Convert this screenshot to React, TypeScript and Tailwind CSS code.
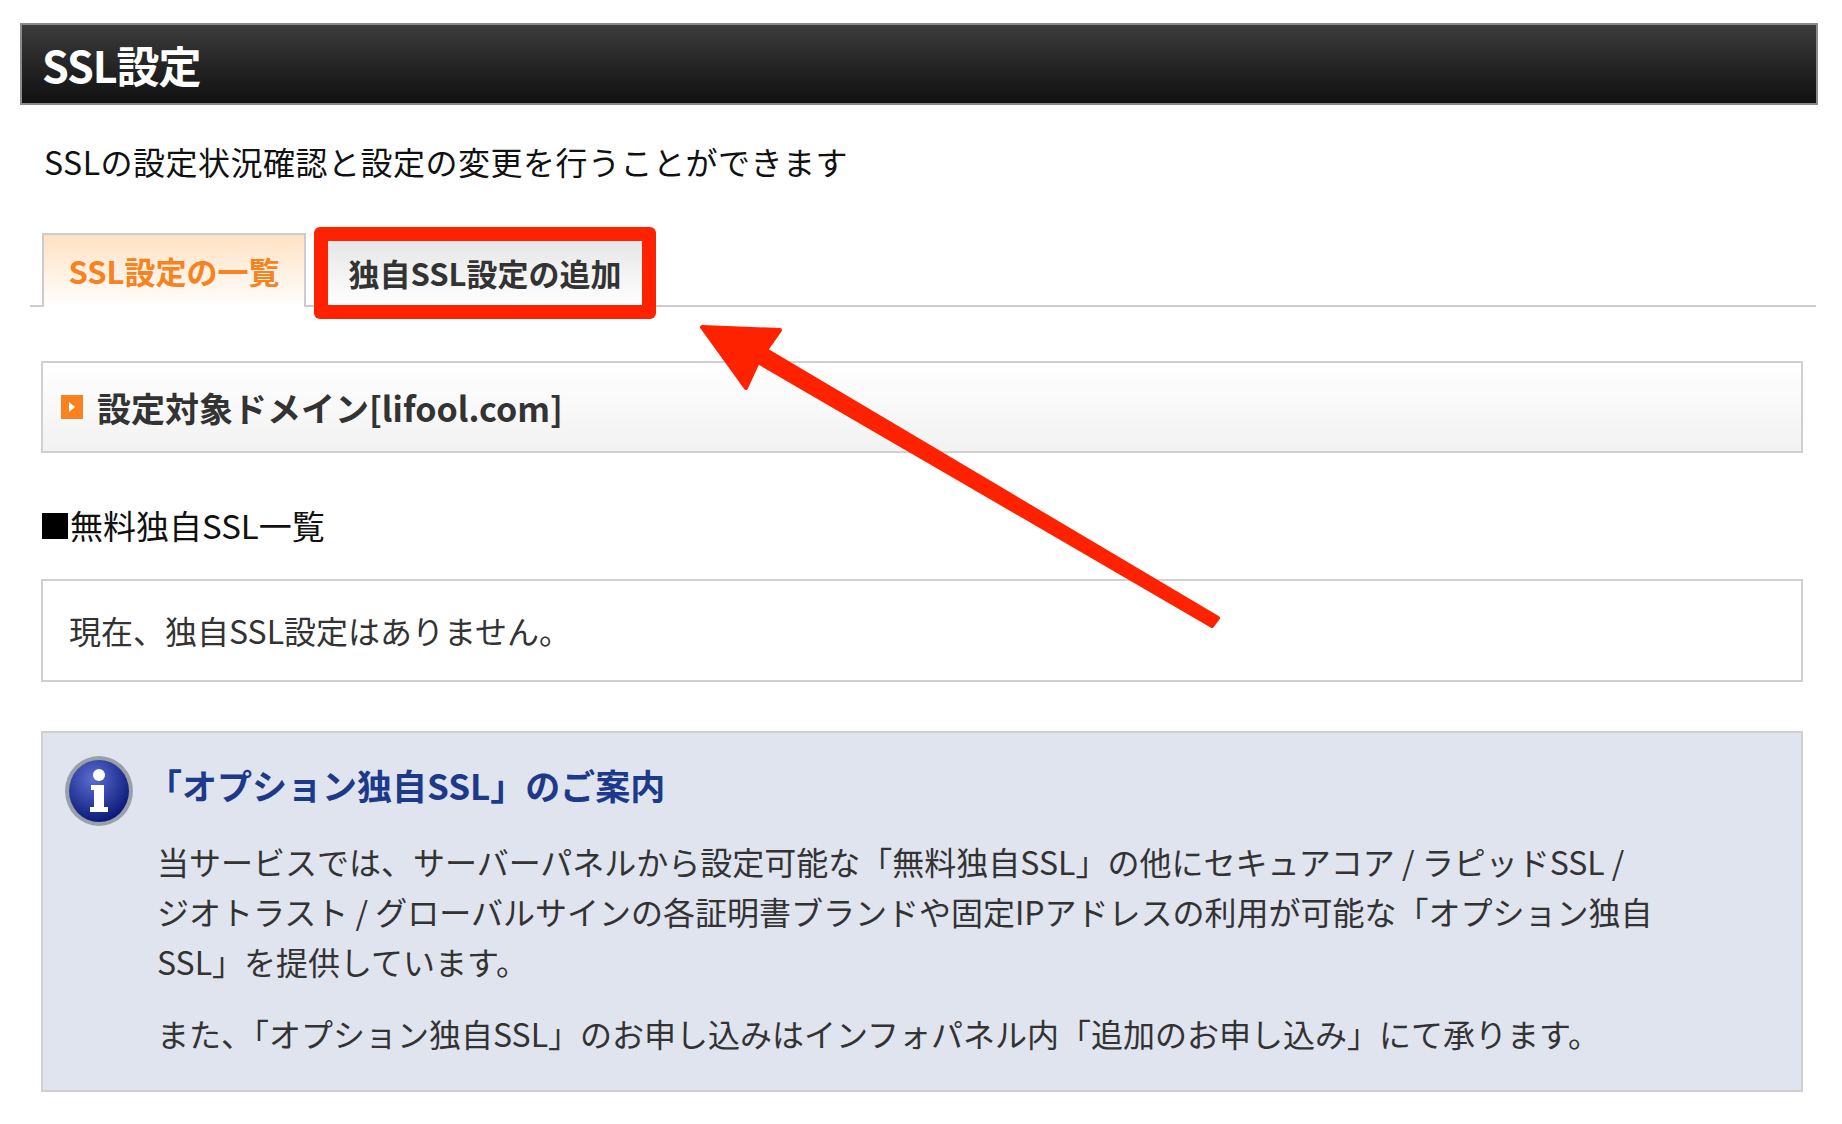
import React from "react";

export default function App() {
  const f = { fontFamily: '"Noto Sans CJK JP", "Noto Sans", sans-serif' };
  return (
    <div className="relative w-[1842px] h-[1124px] bg-white overflow-hidden" style={f}>
      <div className="pt-[23px] pl-[20px] pr-[24px]">
        <div className="h-[82px] border-2 border-[#8a8a8a] bg-gradient-to-b from-[#3c3c3c] to-[#111] flex items-center pl-[20px]">
          <span className="text-white text-[43px] font-bold tracking-tight">SSL設定</span>
        </div>
      </div>
      <div className="pl-[44px] mt-[40px] text-[32px] text-[#111] leading-none tracking-[0.5px]">SSLの設定状況確認と設定の変更を行うことができます</div>
      <div className="mt-[54px] ml-[30px] mr-[26px] border-b-2 border-[#ccc] flex items-end h-[76px] pl-[12px] gap-[8px]">
        <div className="h-[74px] w-[264px] border-2 border-b-0 border-[#ccc] bg-gradient-to-b from-[#ffe1c2] to-white flex items-center justify-center -mb-[2px]">
          <span className="text-[31px] font-bold text-[#f7821e]">SSL設定の一覧</span>
        </div>
        <div className="relative h-[92px] w-[342px] -mb-[14px] bg-[#ff2200] rounded-[6px] p-[14px]">
          <div className="h-full w-full bg-gradient-to-b from-[#e6e6e6] to-white flex items-center justify-center">
            <span className="text-[31px] font-bold text-[#333]">独自SSL設定の追加</span>
          </div>
        </div>
      </div>
      <div className="mt-[54px] ml-[41px] w-[1762px] h-[92px] border-2 border-[#d0d0d0] bg-gradient-to-b from-white to-[#f2f2f2] flex items-center pl-[18px] gap-[14px]">
        <div className="w-[22px] h-[24px] bg-[#f7821e] flex items-center justify-center">
          <div className="w-0 h-0 border-y-[5px] border-y-transparent border-l-[6px] border-l-white" />
        </div>
        <span className="text-[34px] font-bold text-[#333]">設定対象ドメイン[lifool.com]</span>
      </div>
      <div className="mt-[48px] ml-[42px] flex items-center text-[33px] text-[#111]">
        <span className="inline-block w-[26px] h-[26px] bg-black mr-[2px]" />無料独自SSL一覧
      </div>
      <div className="mt-[28px] ml-[41px] w-[1762px] h-[103px] border-2 border-[#d0d0d0] flex items-center pl-[26px] text-[32px] text-[#333]">
        現在、独自SSL設定はありません。
      </div>
      <div className="mt-[49px] ml-[41px] w-[1762px] h-[361px] border-2 border-[#d0d0d0] bg-[#dfe4ee] pt-[22px] pl-[20px] flex gap-[22px]">
        <svg width="72" height="72" viewBox="0 0 72 72" className="shrink-0">
          <defs>
            <radialGradient id="g" cx="40%" cy="30%" r="70%">
              <stop offset="0" stopColor="#5a6fd0" />
              <stop offset="1" stopColor="#0d1a7a" />
            </radialGradient>
          </defs>
          <ellipse cx="36" cy="36" rx="34" ry="35" fill="#9aa0aa" />
          <ellipse cx="36" cy="36" rx="30" ry="31" fill="url(#g)" />
          <circle cx="36" cy="20" r="6" fill="#fff" />
          <path d="M28 30 H41 V52 H45 V57 H27 V52 H31 V35 H28 Z" fill="#fff" />
        </svg>
        <div className="pt-[12px]">
          <div className="text-[35px] font-bold text-[#1d3a8a] leading-none -ml-[10px]">「オプション独自SSL」のご案内</div>
          <div className="mt-[34px] text-[32px] text-[#333] leading-[50px] whitespace-nowrap">
            当サービスでは、サーバーパネルから設定可能な「無料独自SSL」の他にセキュアコア / ラピッドSSL /<br />
            ジオトラスト / グローバルサインの各証明書ブランドや固定IPアドレスの利用が可能な「オプション独自<br />
            SSL」を提供しています。
          </div>
          <div className="mt-[22px] text-[32px] text-[#333] leading-[50px] whitespace-nowrap">
            また、「オプション独自SSL」のお申し込みはインフォパネル内「追加のお申し込み」にて承ります。
          </div>
        </div>
      </div>
      <svg className="absolute left-0 top-0 pointer-events-none" width="1842" height="1124">
        <polygon points="702,327 780,330 766,350 1218,618 1212,626 758,362 746,388" fill="#ff2200" stroke="#ff2200" strokeWidth="4" strokeLinejoin="round" />
      </svg>
    </div>
  );
}
